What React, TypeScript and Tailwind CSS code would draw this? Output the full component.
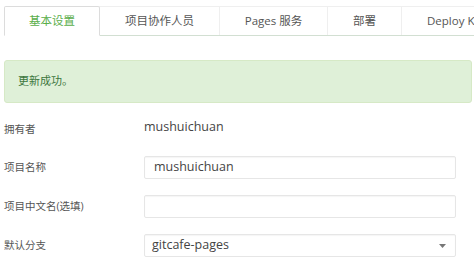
import React from "react";

const tabs: [string, string][] = [
  ["基本设置", "w-[96px]"],
  ["项目协作人员", "w-[120px]"],
  ["Pages 服务", "w-[108px]"],
  ["部署", "w-[74px]"],
  ["Deploy Keys", "w-[100px]"],
];

export default function App() {
  return (
    <div className="w-[474px] h-[271px] overflow-hidden bg-white font-['Open_Sans','Noto_Sans_CJK_SC',sans-serif] text-[#555]">
      <div className="pt-[6px] pl-[4px]">
        <div className="flex h-[30px] border-b border-[#d2dfd2] whitespace-nowrap">
          {tabs.map(([t, w], i) =>
            i === 0 ? (
              <div
                key={t}
                className={`${w} shrink-0 flex items-center justify-center h-[30px] border border-[#dcdcdc] border-b-white bg-white text-[11.5px] text-[#5aae4a] rounded-t-[2px] -mb-px`}
              >
                {t}
              </div>
            ) : (
              <div
                key={t}
                className={`${w} shrink-0 flex items-center ${i === 4 ? "pl-[25px]" : "justify-center"} h-[29px] border-t border-r border-[#efefef] text-[11.5px] text-[#555]`}
              >
                {t}
              </div>
            )
          )}
        </div>
      </div>

      <div className="mt-[24px] mx-[4px] mr-[2px] h-[43px] flex items-center px-[13px] bg-[#dff0d8] border border-[#d6e9c6] rounded-[3px] text-[11px] text-[#3c763d]">
        更新成功。
      </div>

      <div className="mt-[14px] pl-[4px] flex flex-col gap-[16px]">
        <div className="flex items-center h-[23px]">
          <div className="w-[140px] text-[10.5px] text-[#555] pt-[2px]">拥有者</div>
          <div className="text-[12.5px] text-[#444] -mt-[2px]">mushuichuan</div>
        </div>
        <div className="flex items-center h-[23px]">
          <div className="w-[140px] text-[10.5px] text-[#555]">项目名称</div>
          <div className="w-[312px] h-[23px] flex items-center pl-[9px] border border-[#e6e6e6] rounded-[2px] shadow-[inset_0_1px_1px_rgba(0,0,0,0.04)] text-[12.5px] text-[#444]">
            mushuichuan
          </div>
        </div>
        <div className="flex items-center h-[23px]">
          <div className="w-[140px] text-[10.5px] text-[#555]">项目中文名(选填)</div>
          <div className="w-[312px] h-[23px] border border-[#e6e6e6] rounded-[2px] shadow-[inset_0_1px_1px_rgba(0,0,0,0.04)]" />
        </div>
        <div className="flex items-center h-[23px]">
          <div className="w-[140px] text-[10.5px] text-[#555]">默认分支</div>
          <div className="relative w-[312px] h-[23px] flex items-center pl-[7px] border border-[#e6e6e6] rounded-[2px] shadow-[inset_0_1px_1px_rgba(0,0,0,0.04)] text-[12.5px] text-[#444]">
            gitcafe-pages
            <svg className="absolute right-[9px] top-[9px]" width="7" height="4" viewBox="0 0 7 4">
              <path d="M0 0 L7 0 L3.5 4 Z" fill="#777" />
            </svg>
          </div>
        </div>
      </div>
    </div>
  );
}
